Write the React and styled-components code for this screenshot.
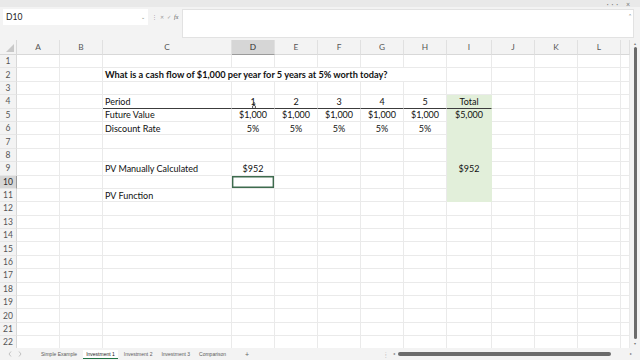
import React from "react";
import styled, { createGlobalStyle } from "styled-components";

const GlobalStyle = createGlobalStyle`
  html, body { margin: 0; padding: 0; background: #f3f3f3; }
  body { width: 640px; height: 360px; overflow: hidden; font-family: Lato, "Open Sans", sans-serif; }
  * { box-sizing: border-box; }
`;

const COLS = "17px 43px 43px 129px 43px 43px 43px 43px 43px 45px 43px 43px 43px 9px";
const LETTERS = ["A", "B", "C", "D", "E", "F", "G", "H", "I", "J", "K", "L", "M"];
const ROW_H = 13.4;

const Page = styled.div`
  width: 640px;
  height: 360px;
  display: flex;
  flex-direction: column;
  background: #f3f3f3;
`;

const FormulaArea = styled.div`
  position: relative;
  height: 40px;
  flex: none;
  display: flex;
  align-items: flex-start;
  padding: 9px 6px 0 3px;
  background: linear-gradient(#e9e9e9 0, #e9e9e9 7px, #f3f3f3 7px);
`;

const NameBox = styled.div`
  width: 145px;
  height: 16px;
  background: #fff;
  display: flex;
  align-items: center;
  justify-content: space-between;
  padding: 0 3px 0 3px;
  font-size: 8.5px;
  color: #222;
`;

const Chevron = styled.span`
  font-size: 5px;
  color: #777;
`;

const FxTools = styled.div`
  width: 34px;
  height: 16px;
  display: flex;
  align-items: center;
  justify-content: space-around;
  padding: 0 2px;
  font-size: 5px;
  color: #9a9a9a;
`;

const FxLabel = styled.span`
  font-family: "Liberation Serif", serif;
  font-style: italic;
  color: #555;
  font-size: 6px;
`;

const FormulaInput = styled.div`
  flex: 1;
  height: 29px;
  background: #fff;
  border: 1px solid #e2e2e2;
  position: relative;
`;

const CollapseCaret = styled.span`
  position: absolute;
  right: 1px;
  top: 3px;
  font-size: 5px;
  color: #777;
`;

const WindowCtl = styled.div`
  position: absolute;
  right: 7px;
  top: 0;
  font-size: 7px;
  color: #777;
  letter-spacing: 3px;
`;

const Body = styled.div`
  height: 308px;
  flex: none;
  display: flex;
  overflow: hidden;
`;

const Sheet = styled.div`
  width: 630px;
  overflow: hidden;
  background: #fff;
`;

const HeaderRow = styled.div`
  display: grid;
  grid-template-columns: ${COLS};
  height: 15px;
  background: #f3f3f3;
`;

const ColHead = styled.div`
  display: flex;
  align-items: center;
  justify-content: center;
  font-size: 8.3px;
  color: ${(p) => (p.$active ? "#2b2b2b" : "#555")};
  background: ${(p) => (p.$active ? "#d6d6d6" : "#f3f3f3")};
  border-right: 1px solid #e0e0e0;
  border-bottom: ${(p) => (p.$active ? "1.5px solid #9a9a9a" : "1px solid #d8d8d8")};
`;

const Corner = styled.div`
  position: relative;
  background: #f3f3f3;
  border-right: 1px solid #d8d8d8;
  border-bottom: 1px solid #d8d8d8;
  svg { position: absolute; right: 2px; bottom: 2px; }
`;

const Row = styled.div`
  display: grid;
  grid-template-columns: ${COLS};
  height: ${ROW_H}px;
`;

const RowHead = styled.div`
  display: flex;
  align-items: center;
  justify-content: center;
  font-size: 8.5px;
  color: ${(p) => (p.$active ? "#2b2b2b" : "#555")};
  background: ${(p) => (p.$active ? "#d6d6d6" : "#f3f3f3")};
  border-right: ${(p) => (p.$active ? "1.5px solid #9a9a9a" : "1px solid #d8d8d8")};
  border-bottom: 1px solid #e6e6e6;
`;

const Cell = styled.div`
  position: relative;
  grid-column: ${(p) => (p.$span ? `span ${p.$span}` : "auto")};
  display: flex;
  align-items: center;
  justify-content: ${(p) => (p.$align === "center" ? "center" : "flex-start")};
  padding-left: ${(p) => (p.$align === "center" ? "0" : "2px")};
  white-space: nowrap;
  font-size: ${(p) => (p.$bold ? "9.2px" : "9px")};
  font-weight: ${(p) => (p.$bold ? 700 : 400)};
  color: #111;
  background: ${(p) => (p.$fill ? "#e2efda" : "#fff")};
  border-right: 1px solid ${(p) => (p.$fill ? "#e2efda" : "#eaeaea")};
  border-bottom: ${(p) =>
    p.$rule ? "1.2px solid #3c3c3c" : `1px solid ${p.$fill ? "#e2efda" : "#eaeaea"}`};
  box-shadow: ${(p) => (p.$selected ? "inset 0 0 0 1.4px #3e6b4e" : "none")};
`;

const Pointer = styled.svg`
  position: absolute;
  left: 18px;
  top: 7px;
`;

const VScroll = styled.div`
  width: 10px;
  background: #f3f3f3;
  display: flex;
  flex-direction: column;
  align-items: center;
  padding-top: 1px;
`;

const ScrollArrow = styled.span`
  font-size: 4px;
  color: #777;
  line-height: 6px;
`;

const VThumb = styled.div`
  width: 3.5px;
  height: 292px;
  border-radius: 2px;
  background: #6b6b6b;
  margin: 0 0 2px 1px;
`;

const TabBar = styled.div`
  height: 12px;
  flex: none;
  display: flex;
  align-items: center;
  background: #f3f3f3;
  font-size: 5px;
  color: #555;
`;

const NavArrows = styled.div`
  width: 38px;
  display: flex;
  align-items: center;
  gap: 6px;
  padding-left: 8px;
`;

const Tabs = styled.div`
  display: flex;
  align-items: center;
  gap: 3px;
`;

const Tab = styled.div`
  padding: 1px 3px 1px;
  color: ${(p) => (p.$active ? "#1a1a1a" : "#5a5a5a")};
  background: ${(p) => (p.$active ? "#fff" : "transparent")};
  border-bottom: ${(p) => (p.$active ? "1px solid #217346" : "1px solid transparent")};
  font-family: "Liberation Sans", sans-serif;
`;

const AddTab = styled.div`
  margin-left: 16px;
  font-size: 7px;
  color: #666;
`;

const HScroll = styled.div`
  margin-left: auto;
  width: 255px;
  display: flex;
  align-items: center;
  gap: 3px;
  padding-right: 8px;
`;

const Splitter = styled.span`
  font-size: 6px;
  color: #aaa;
  margin-right: 3px;
`;

const HThumb = styled.div`
  flex: 1;
  height: 3.5px;
  border-radius: 2px;
  background: #6b6b6b;
  margin-right: 16px;
`;

const title = "What is a cash flow of $1,000 per year for 5 years at 5% worth today?";

const cells = {
  C2: { text: title, bold: true, span: 6 },
  C4: { text: "Period" },
  D4: { text: "1", align: "center", pointer: true },
  E4: { text: "2", align: "center" },
  F4: { text: "3", align: "center" },
  G4: { text: "4", align: "center" },
  H4: { text: "5", align: "center" },
  I4: { text: "Total", align: "center" },
  C5: { text: "Future Value" },
  D5: { text: "$1,000", align: "center" },
  E5: { text: "$1,000", align: "center" },
  F5: { text: "$1,000", align: "center" },
  G5: { text: "$1,000", align: "center" },
  H5: { text: "$1,000", align: "center" },
  I5: { text: "$5,000", align: "center" },
  C6: { text: "Discount Rate" },
  D6: { text: "5%", align: "center" },
  E6: { text: "5%", align: "center" },
  F6: { text: "5%", align: "center" },
  G6: { text: "5%", align: "center" },
  H6: { text: "5%", align: "center" },
  C9: { text: "PV Manually Calculated" },
  D9: { text: "$952", align: "center" },
  I9: { text: "$952", align: "center" },
  C11: { text: "PV Function" },
};

function renderRow(r) {
  const out = [];
  let skip = 0;
  LETTERS.forEach((L, i) => {
    if (skip > 0) {
      skip--;
      return;
    }
    const key = `${L}${r}`;
    const c = cells[key] || {};
    if (c.span) skip = c.span - 1;
    const fill = L === "I" && r >= 4 && r <= 11;
    const rule = r === 4 && i >= 2 && i <= 8;
    out.push(
      <Cell
        key={key}
        $span={c.span}
        $align={c.align}
        $bold={c.bold}
        $fill={fill}
        $rule={rule}
        $selected={key === "D10"}
      >
        {c.text}
        {c.pointer && (
          <Pointer width="8" height="8" viewBox="0 0 8 8">
            <circle cx="4" cy="5" r="1.6" fill="none" stroke="#333" strokeWidth="0.8" />
            <path d="M4 0.5 V3.4 M2.6 1.6 L4 0.5 L5.4 1.6" fill="none" stroke="#333" strokeWidth="0.7" />
          </Pointer>
        )}
      </Cell>
    );
  });
  return out;
}

const Arrow = ({ dir }) => (
  <svg width="4" height="6" viewBox="0 0 4 6">
    <path
      d={dir === "left" ? "M3 0.5 L1 3 L3 5.5" : "M1 0.5 L3 3 L1 5.5"}
      fill="none"
      stroke="#b5b5b5"
      strokeWidth="0.8"
    />
  </svg>
);

export default function App() {
  const rows = Array.from({ length: 22 }, (_, i) => i + 1);
  return (
    <Page>
      <GlobalStyle />
      <FormulaArea>
        <NameBox>
          <span>D10</span>
          <Chevron>⌄</Chevron>
        </NameBox>
        <FxTools>
          <span>⋮</span>
          <span>✕</span>
          <span>✓</span>
          <FxLabel>fx</FxLabel>
        </FxTools>
        <FormulaInput>
          <CollapseCaret>⌃</CollapseCaret>
        </FormulaInput>
        <WindowCtl>··· ×</WindowCtl>
      </FormulaArea>
      <Body>
        <Sheet>
          <HeaderRow>
            <Corner>
              <svg width="8" height="8" viewBox="0 0 8 8">
                <path d="M8 0 L8 8 L0 8 Z" fill="#c8c8c8" />
              </svg>
            </Corner>
            {LETTERS.map((L) => (
              <ColHead key={L} $active={L === "D"}>
                {L === "M" ? "" : L}
              </ColHead>
            ))}
          </HeaderRow>
          {rows.map((r) => (
            <Row key={r}>
              <RowHead $active={r === 10}>{r}</RowHead>
              {renderRow(r)}
            </Row>
          ))}
        </Sheet>
        <VScroll>
          <ScrollArrow>▴</ScrollArrow>
          <VThumb />
          <ScrollArrow>▾</ScrollArrow>
        </VScroll>
      </Body>
      <TabBar>
        <NavArrows>
          <Arrow dir="left" />
          <Arrow dir="right" />
        </NavArrows>
        <Tabs>
          <Tab>Simple Example</Tab>
          <Tab $active>Investment 1</Tab>
          <Tab>Investment 2</Tab>
          <Tab>Investment 3</Tab>
          <Tab>Comparison</Tab>
        </Tabs>
        <AddTab>+</AddTab>
        <HScroll>
          <Splitter>⁞</Splitter>
          <ScrollArrow>◂</ScrollArrow>
          <HThumb />
          <ScrollArrow>▸</ScrollArrow>
        </HScroll>
      </TabBar>
    </Page>
  );
}
